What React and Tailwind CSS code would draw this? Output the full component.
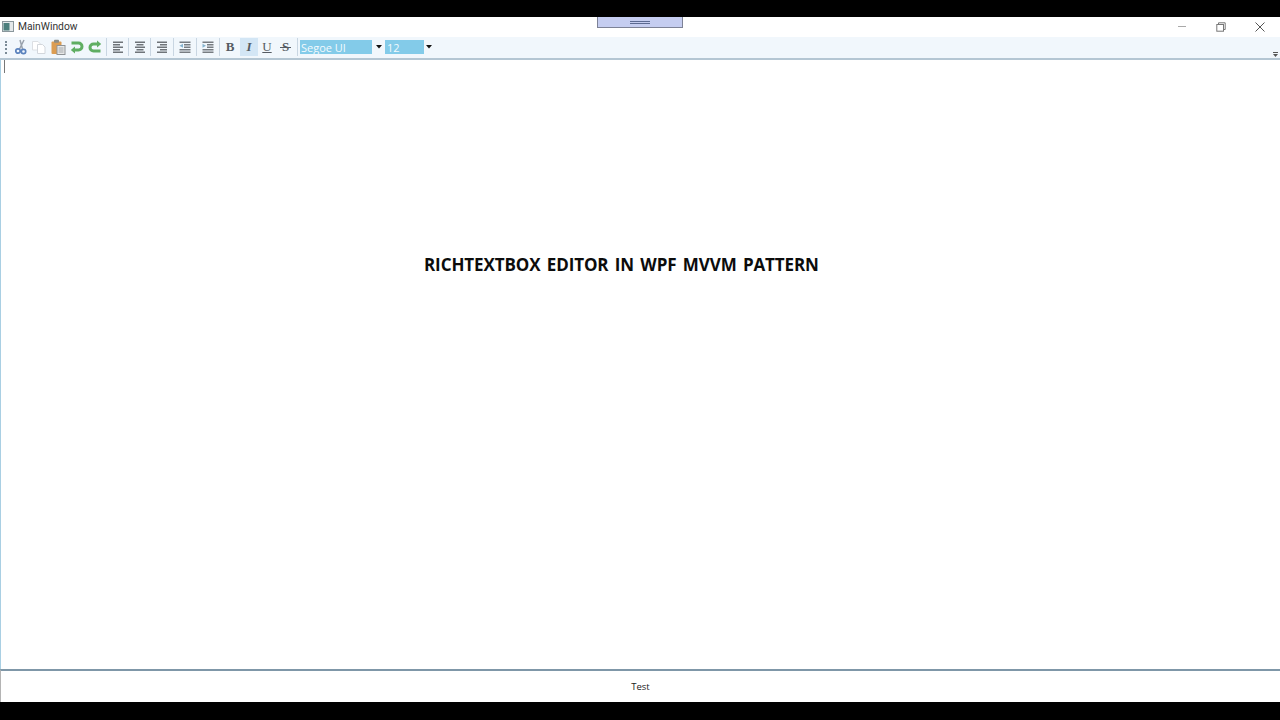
const Sep = () => <div className="w-px h-[18px] bg-[#c9d6e2] shrink-0" />;

const Lines = ({ kind }) => {
  const rows = [1.5, 4, 6.5, 9, 11.5];
  const spec = {
    left: [[2, 10], [2, 7], [2, 10], [2, 7], [2, 10]],
    center: [[2, 10], [3.5, 7], [2, 10], [3.5, 7], [2, 10]],
    right: [[2, 10], [5, 7], [2, 10], [5, 7], [2, 10]],
  }[kind];
  return (
    <svg width="14" height="14" viewBox="0 0 14 14">
      {rows.map((y, i) => (
        <rect key={i} x={spec[i][0]} y={y} width={spec[i][1]} height="1.5" fill="#6f7479" />
      ))}
    </svg>
  );
};

const Indent = ({ right }) => (
  <svg width="14" height="14" viewBox="0 0 14 14">
    <rect x="1.5" y="1.5" width="11" height="1.5" fill="#777c81" />
    <rect x="6" y="4" width="6.5" height="1.5" fill="#777c81" />
    <rect x="6" y="6.5" width="6.5" height="1.5" fill="#777c81" />
    <rect x="1.5" y="9" width="11" height="1.5" fill="#777c81" />
    <rect x="1.5" y="11.5" width="11" height="1.5" fill="#777c81" />
    <path d={right ? "M5 5.8 L1.5 3.8 V7.8 Z" : "M1.5 5.8 L5 3.8 V7.8 Z"} fill="#86b4d0" />
  </svg>
);

const Cut = () => (
  <svg width="16" height="16" viewBox="0 0 16 16">
    <path d="M11 1 L6.5 10 M7 1 L9.5 10" stroke="#9aa3ad" strokeWidth="1.5" fill="none" />
    <circle cx="5" cy="12" r="2.2" fill="none" stroke="#5a82bd" strokeWidth="1.7" />
    <circle cx="10.5" cy="12.5" r="2.2" fill="none" stroke="#5a82bd" strokeWidth="1.7" />
  </svg>
);

const Copy = () => (
  <svg width="16" height="16" viewBox="0 0 16 16">
    <path d="M1.5 2.5 H7 L9.5 5 V11 H1.5 Z" fill="#fff" stroke="#dcdfe3" />
    <path d="M6.5 5.5 H11.5 L14 8 V14.5 H6.5 Z" fill="#fff" stroke="#d3d7dc" />
  </svg>
);

const Paste = () => (
  <svg width="16" height="16" viewBox="0 0 16 16">
    <rect x="1.5" y="2.5" width="10" height="12.5" rx="1" fill="#dc9d52" />
    <rect x="4" y="0.8" width="5" height="3" rx="0.8" fill="#8d8d86" />
    <rect x="7" y="6.5" width="8" height="9" fill="#e8e9e8" stroke="#8f9396" />
    <path d="M8.5 9 H13.5 M8.5 11 H13.5 M8.5 13 H13.5" stroke="#a4a8ab" />
  </svg>
);

const Arrow = ({ flip }) => (
  <svg width="14" height="14" viewBox="0 0 14 14" style={flip ? { transform: "rotate(180deg)" } : undefined}>
    <path d="M1.5 3 H8.5 A3.5 3.5 0 0 1 8.5 10 H4" fill="none" stroke="#5fae62" strokeWidth="3" />
    <path d="M5 6.5 L0.8 10 L5 13.5 Z" fill="#5fae62" />
  </svg>
);

const Drop = () => (
  <svg width="6" height="4" viewBox="0 0 6 4" className="shrink-0">
    <path d="M0 0 H6 L3 3.5 Z" fill="#111" />
  </svg>
);

const Btn = ({ w = "w-[18px]", children, active }) => (
  <div className={`${w} h-[18px] shrink-0 flex items-center justify-center ${active ? "bg-[#d3e6f5]" : ""}`}>
    {children}
  </div>
);

const Fmt = ({ children, className = "" }) => (
  <span className={`font-['Liberation_Serif',serif] text-[13px] leading-none text-[#555b62] -mt-[2px] ${className}`}>
    {children}
  </span>
);

export default function App() {
  return (
    <div className="relative w-[1280px] h-[720px] overflow-hidden bg-black flex flex-col pt-[17px] pb-[18px] font-['Open_Sans',sans-serif]">
      <div className="h-5 shrink-0 bg-white flex items-center pl-[2px] pb-[1px]">
        <svg width="12" height="11" viewBox="0 0 12 11" className="shrink-0">
          <rect x="0.5" y="0.5" width="11" height="10" fill="#e4e8ea" stroke="#8a979c" />
          <rect x="1.5" y="2" width="6" height="7.5" fill="#4c7f7d" />
        </svg>
        <span className="ml-1 mt-[2px] font-['Roboto',sans-serif] text-[10.3px] leading-none text-[#333]">MainWindow</span>
        <div className="ml-auto flex items-center">
          <div className="w-10 flex justify-center">
            <div className="w-[8px] h-px bg-[#a9a9a9]" />
          </div>
          <div className="w-[38px] flex justify-center">
            <svg width="10" height="10" viewBox="0 0 10 10">
              <path d="M2.5 2.5 V0.8 H9.2 V7.5 H7.5" fill="none" stroke="#777" />
              <rect x="0.8" y="2.5" width="6.7" height="6.7" fill="none" stroke="#777" />
            </svg>
          </div>
          <div className="w-[40px] flex justify-center">
            <svg width="10" height="10" viewBox="0 0 10 10">
              <path d="M0.5 0.5 L9.5 9.5 M9.5 0.5 L0.5 9.5" stroke="#555" strokeWidth="1" />
            </svg>
          </div>
        </div>
      </div>

      <div className="h-[23px] shrink-0 bg-[#f1f7fc] border-b-2 border-[#b4c6d3] flex items-center pl-[5px] pb-[1px] relative">
        <div className="w-[2px] h-[13px] shrink-0 border-l-2 border-dotted border-[#7a8a96]" />
        <div className="w-[5px] shrink-0" />
        <Btn><Cut /></Btn>
        <Btn><Copy /></Btn>
        <Btn w="w-[20px]"><Paste /></Btn>
        <Btn><Arrow /></Btn>
        <Btn w="w-[18px]"><Arrow flip /></Btn>
        <div className="w-[2px] shrink-0" />
        <Sep />
        <Btn w="w-[21px]"><Lines kind="left" /></Btn>
        <Sep />
        <Btn w="w-[21px]"><Lines kind="center" /></Btn>
        <Sep />
        <Btn w="w-[22px]"><Lines kind="right" /></Btn>
        <Sep />
        <Btn w="w-[22px]"><Indent /></Btn>
        <Sep />
        <Btn w="w-[22px]"><Indent right /></Btn>
        <Sep />
        <Btn w="w-[20px]"><Fmt className="font-bold">B</Fmt></Btn>
        <Btn w="w-[18px]" active><Fmt className="font-bold italic">I</Fmt></Btn>
        <Btn w="w-[18px]"><Fmt className="underline">U</Fmt></Btn>
        <Btn w="w-[19px]">
          <span className="relative flex items-center justify-center">
            <Fmt className="font-bold">S</Fmt>
            <span className="absolute left-[-2px] right-[-2px] top-[5px] h-px bg-[#555b62]" />
          </span>
        </Btn>
        <div className="w-[2px] shrink-0" />
        <Sep />
        <div className="w-[2px] shrink-0" />
        <div className="w-[72px] h-[14px] shrink-0 bg-[#83cbe9] flex items-center pl-[1px]">
          <span className="text-[11px] leading-none text-[#f2fafd]">Segoe UI</span>
        </div>
        <div className="w-[13px] shrink-0 flex justify-center"><Drop /></div>
        <div className="w-[39px] h-[14px] shrink-0 bg-[#83cbe9] flex items-center pl-[2px]">
          <span className="text-[11px] leading-none text-[#f2fafd]">12</span>
        </div>
        <div className="w-[10px] shrink-0 flex justify-center"><Drop /></div>
        <div className="ml-auto mr-[2px] self-end flex flex-col items-center gap-px">
          <div className="w-[5px] h-px bg-[#555]" />
          <svg width="5" height="3" viewBox="0 0 5 3"><path d="M0 0 H5 L2.5 3 Z" fill="#555" /></svg>
        </div>
      </div>

      <div className="flex-1 min-h-0 bg-white border-l border-[#a9cfe3] relative flex flex-col">
        <div className="absolute left-[3px] top-0 w-px h-[13px] bg-[#777]" />
        <h1 className="mt-[195px] ml-[423px] w-max text-[17px] tracking-[-0.1px] [word-spacing:2px] leading-5 font-bold text-[#0c0c0c]">
          RICHTEXTBOX EDITOR IN WPF MVVM PATTERN
        </h1>
      </div>

      <div className="h-[33px] shrink-0 bg-white border-t-2 border-[#7f97a8] border-l border-l-[#b4b4b4] flex items-center justify-center pt-[1px]">
        <span className="text-[9.5px] leading-none text-[#222]">Test</span>
      </div>

      <div className="absolute left-[597px] top-[17px] w-[86px] h-[11px] bg-[#c5cdf0] border border-[#7d8296] border-t-0 flex flex-col items-center justify-center gap-px">
        <div className="w-5 h-px bg-[#5c6a92]" />
        <div className="w-5 h-px bg-[#5c6a92]" />
      </div>
    </div>
  );
}
